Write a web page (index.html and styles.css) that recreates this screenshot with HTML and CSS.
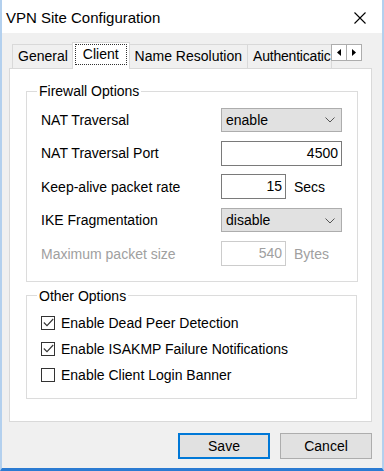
FILE: index.html
```html
<!DOCTYPE html>
<html lang="en">
<head>
    <meta charset="UTF-8">
    <title>VPN Site Configuration</title>
    <link rel="stylesheet" href="styles.css">
</head>
<body>
    <div class="window">
        <div class="titlebar">
            <span class="title">VPN Site Configuration</span>
            <svg class="close" width="12" height="12" viewBox="0 0 12 12">
                <path d="M0.5 0.5 L11.5 11.5 M11.5 0.5 L0.5 11.5" stroke="#000" stroke-width="1.1" fill="none"/>
            </svg>
        </div>

        <div class="tabs">
            <div class="tab">General</div>
            <div class="tab selected"><span class="focus">Client</span></div>
            <div class="tab">Name Resolution</div>
            <div class="tab clipped">Authenticatic</div>
            <div class="scroll">
                <div class="arrow"><svg width="4" height="7" viewBox="0 0 4 7"><path d="M4 0 L0 3.5 L4 7 Z" fill="#000"/></svg></div>
                <div class="arrow"><svg width="4" height="7" viewBox="0 0 4 7"><path d="M0 0 L4 3.5 L0 7 Z" fill="#000"/></svg></div>
            </div>
        </div>

        <div class="panel">
            <fieldset class="group firewall">
                <legend>Firewall Options</legend>
                <div class="row">
                    <span class="label">NAT Traversal</span>
                    <div class="select">enable<span class="chev"><svg width="10" height="6" viewBox="0 0 10 6"><path d="M0.5 0.5 L5 5 L9.5 0.5" stroke="#555" fill="none"/></svg></span></div>
                </div>
                <div class="row">
                    <span class="label">NAT Traversal Port</span>
                    <div class="input wide">4500</div>
                </div>
                <div class="row">
                    <span class="label">Keep-alive packet rate</span>
                    <div class="input short">15</div>
                    <span class="unit">Secs</span>
                </div>
                <div class="row">
                    <span class="label">IKE Fragmentation</span>
                    <div class="select">disable<span class="chev"><svg width="10" height="6" viewBox="0 0 10 6"><path d="M0.5 0.5 L5 5 L9.5 0.5" stroke="#555" fill="none"/></svg></span></div>
                </div>
                <div class="row disabled">
                    <span class="label">Maximum packet size</span>
                    <div class="input short">540</div>
                    <span class="unit">Bytes</span>
                </div>
            </fieldset>

            <fieldset class="group other">
                <legend>Other Options</legend>
                <div class="check"><span class="box"><svg width="11" height="9" viewBox="0 0 11 9"><path d="M0.8 4.5 L4 7.6 L10.2 1" stroke="#333" stroke-width="1.1" fill="none"/></svg></span>Enable Dead Peer Detection</div>
                <div class="check"><span class="box"><svg width="11" height="9" viewBox="0 0 11 9"><path d="M0.8 4.5 L4 7.6 L10.2 1" stroke="#333" stroke-width="1.1" fill="none"/></svg></span>Enable ISAKMP Failure Notifications</div>
                <div class="check"><span class="box"></span>Enable Client Login Banner</div>
            </fieldset>
        </div>

        <div class="buttons">
            <div class="button default">Save</div>
            <div class="button">Cancel</div>
        </div>
    </div>
</body>
</html>
```

FILE: styles.css
```css
html, body {
    margin: 0;
    padding: 0;
}
body {
    font-family: "Liberation Sans", Arial, sans-serif;
    font-size: 14px;
    color: #000;
    width: 384px;
    height: 471px;
    overflow: hidden;
}
.window {
    box-sizing: border-box;
    width: 384px;
    height: 471px;
    background: #f0f0f0;
    border-left: 2px solid #b3d0ee;
    border-right: 2px solid #b3d0ee;
    border-bottom: 3px solid #2b7bd2;
    display: flex;
    flex-direction: column;
}
.titlebar {
    height: 33px;
    background: #fff;
    display: flex;
    align-items: center;
    justify-content: space-between;
    padding: 0 16px 0 4px;
    flex-shrink: 0;
}
.title {
    font-size: 15px;
    margin-top: 1px;
}
.close {
    margin-top: 2px;
}

/* tab strip */
.tabs {
    display: flex;
    align-items: flex-end;
    height: 35px;
    padding-left: 10px;
    flex-shrink: 0;
    position: relative;
    z-index: 1;
}
.tab {
    box-sizing: border-box;
    height: 24px;
    line-height: 22px;
    padding: 0 5px;
    border: 1px solid #d9d9d9;
    border-bottom: none;
    margin-right: -1px;
    background: #f0f0f0;
    white-space: nowrap;
}
.tab.selected {
    height: 27px;
    background: #fff;
    margin-bottom: -1px;
    padding: 1px 2px 0;
    margin-left: -1px;
    margin-right: -1px;
    position: relative;
}
.focus {
    display: block;
    line-height: 19px;
    padding: 0 7px;
    border: 1px dotted #333;
}
.tab.clipped {
    width: 85px;
    padding: 0 0 0 5px;
    letter-spacing: -0.2px;
}
.scroll {
    display: flex;
    align-self: flex-start;
    margin-top: 11px;
    position: relative;
    z-index: 2;
}
.arrow {
    box-sizing: border-box;
    width: 16px;
    height: 17px;
    border: 1px solid #adadad;
    background: #fff;
    display: flex;
    align-items: center;
    justify-content: center;
    margin-right: -1px;
}

/* panel */
.panel {
    box-sizing: border-box;
    height: 354px;
    margin: 0 10px 0 7px;
    background: #fff;
    border: 1px solid #d9d9d9;
    padding: 14px 14px 0 16px;
    flex-shrink: 0;
}
.group {
    margin: 0;
    border: 1px solid #dcdcdc;
    padding: 0 15px 0 14px;
}
.group legend {
    padding: 0 2px;
    margin-left: -4px;
    line-height: 16px;
}
.firewall {
    padding-top: 4px;
    padding-bottom: 10px;
}
.row {
    display: flex;
    align-items: center;
    height: 33.5px;
}
.label {
    width: 180px;
    flex-shrink: 0;
}
.select {
    box-sizing: border-box;
    width: 121px;
    height: 24px;
    border: 1px solid #adadad;
    background: #e1e1e1;
    display: flex;
    align-items: center;
    justify-content: space-between;
    padding: 0 6px 0 4px;
}
.chev {
    display: flex;
    margin-top: 1px;
}
.input {
    box-sizing: border-box;
    height: 25px;
    border: 1px solid #7a7a7a;
    background: #fff;
    text-align: right;
    line-height: 23px;
    padding-right: 3px;
}
.input.wide {
    width: 121px;
}
.input.short {
    width: 65px;
}
.unit {
    margin-left: 8px;
}
.disabled {
    color: #a0a0a0;
}
.disabled .input {
    border-color: #cccccc;
}
.other {
    margin-top: 6px;
    padding-top: 6px;
    padding-bottom: 10px;
}
.check {
    display: flex;
    align-items: center;
    height: 26px;
}
.box {
    box-sizing: border-box;
    width: 14px;
    height: 14px;
    border: 1px solid #333;
    margin-right: 6px;
    display: flex;
    align-items: center;
    justify-content: center;
    flex-shrink: 0;
}

/* dialog buttons */
.buttons {
    display: flex;
    justify-content: flex-end;
    gap: 10px;
    padding: 11px 10px 0 0;
}
.button {
    box-sizing: border-box;
    width: 92px;
    height: 26px;
    border: 1px solid #adadad;
    background: #e1e1e1;
    text-align: center;
    line-height: 24px;
}
.button.default {
    border: 2px solid #0078d7;
    line-height: 22px;
}
```
